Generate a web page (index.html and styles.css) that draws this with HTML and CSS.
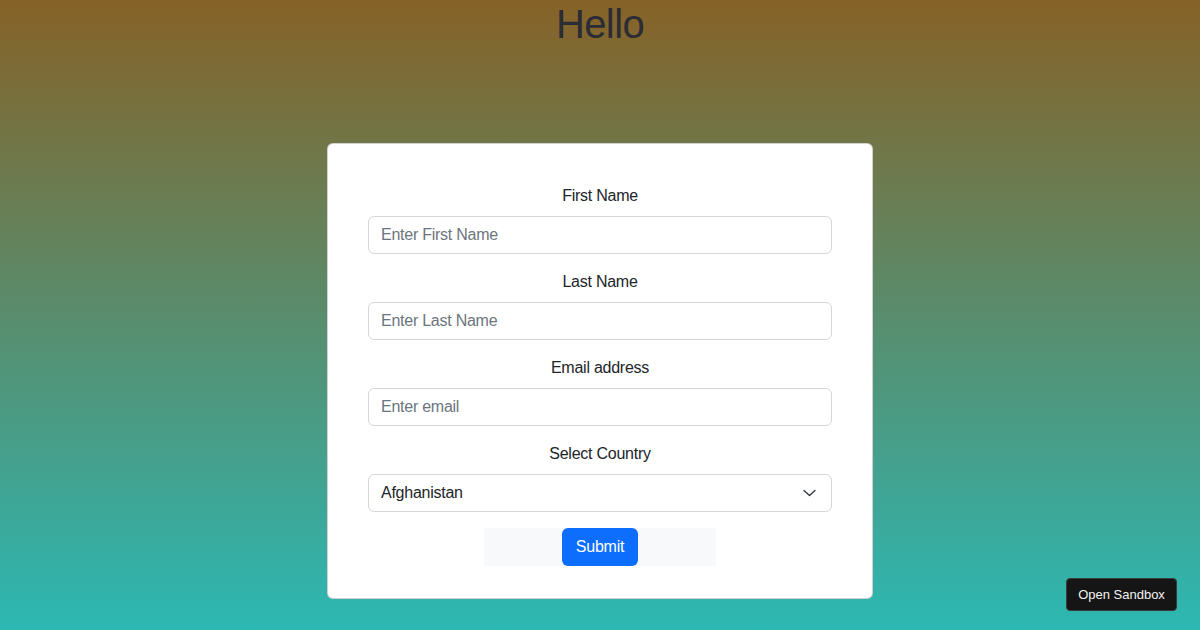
FILE: index.html
```html
<!DOCTYPE html>
<html lang="en">
<head>
<meta charset="utf-8">
<title>Hello</title>
<link rel="stylesheet" href="styles.css">
</head>
<body>
<h1 class="title">Hello</h1>
<div class="card">
  <form class="form">
    <div class="group">
      <label class="label" for="fn">First Name</label>
      <input class="control" id="fn" type="text" placeholder="Enter First Name">
    </div>
    <div class="group">
      <label class="label" for="ln">Last Name</label>
      <input class="control" id="ln" type="text" placeholder="Enter Last Name">
    </div>
    <div class="group">
      <label class="label" for="em">Email address</label>
      <input class="control" id="em" type="email" placeholder="Enter email">
    </div>
    <div class="group">
      <label class="label" for="co">Select Country</label>
      <div class="select">
        <span class="select-value">Afghanistan</span>
        <svg class="chev" width="13" height="8" viewBox="0 0 13 8"><path d="M1 1.5l5.5 5 5.5-5" fill="none" stroke="#343a40" stroke-width="1.4" stroke-linecap="round" stroke-linejoin="round"/></svg>
      </div>
    </div>
    <div class="actions">
      <button class="btn" type="button">Submit</button>
    </div>
  </form>
</div>
<button class="sandbox" type="button">Open Sandbox</button>
</body>
</html>
```
FILE: styles.css
```css
* { box-sizing: border-box; }
html, body { margin: 0; padding: 0; }
body {
  min-height: 100vh;
  background: linear-gradient(180deg, #866227 0%, #2cb8b3 100%);
  font-family: "Liberation Sans", Arial, sans-serif;
  color: #212529;
  display: flex;
  flex-direction: column;
  align-items: center;
}
.title {
  margin: 0;
  font-size: 40px;
  line-height: 48px;
  font-weight: 400;
  letter-spacing: -0.6px;
  color: #2b2c34;
  text-align: center;
}
.card {
  margin-top: 95px;
  width: 546px;
  background: #fff;
  border: 1px solid rgba(0,0,0,0.18);
  border-radius: 6px;
  padding: 40px 40px 32px;
  letter-spacing: -0.25px;
}
.form { display: flex; flex-direction: column; }
.group {
  display: flex;
  flex-direction: column;
  margin-bottom: 16px;
}
.label {
  text-align: center;
  font-size: 16px;
  line-height: 24px;
  margin-bottom: 8px;
  color: #212529;
}
.control, .select {
  height: 38px;
  width: 100%;
  border: 1px solid #d4d6dc;
  border-radius: 6px;
  padding: 6px 12px;
  font-family: inherit;
  font-size: 16px;
  line-height: 24px;
  letter-spacing: -0.25px;
  color: #212529;
  background: #fff;
}
.control::placeholder { color: #6c757d; }
.select {
  display: flex;
  align-items: center;
  justify-content: space-between;
  padding-right: 15px;
}
.chev { display: block; }
.actions {
  align-self: center;
  width: 232px;
  background: #f8f9fa;
  display: flex;
  justify-content: center;
}
.btn {
  height: 38px;
  width: 76px;
  border: 0;
  border-radius: 6px;
  background: #0d6efd;
  color: #fff;
  font-family: inherit;
  font-size: 16px;
  line-height: 24px;
  letter-spacing: -0.25px;
  padding: 6px 12px;
}
.sandbox {
  position: fixed;
  right: 23px;
  bottom: 19px;
  width: 111px;
  height: 33px;
  background: #151515;
  color: #f2f2f2;
  border: 1px solid #3a3a3a;
  border-radius: 4px;
  font-family: "Liberation Sans", Arial, sans-serif;
  font-size: 13px;
  padding: 0;
}
```
